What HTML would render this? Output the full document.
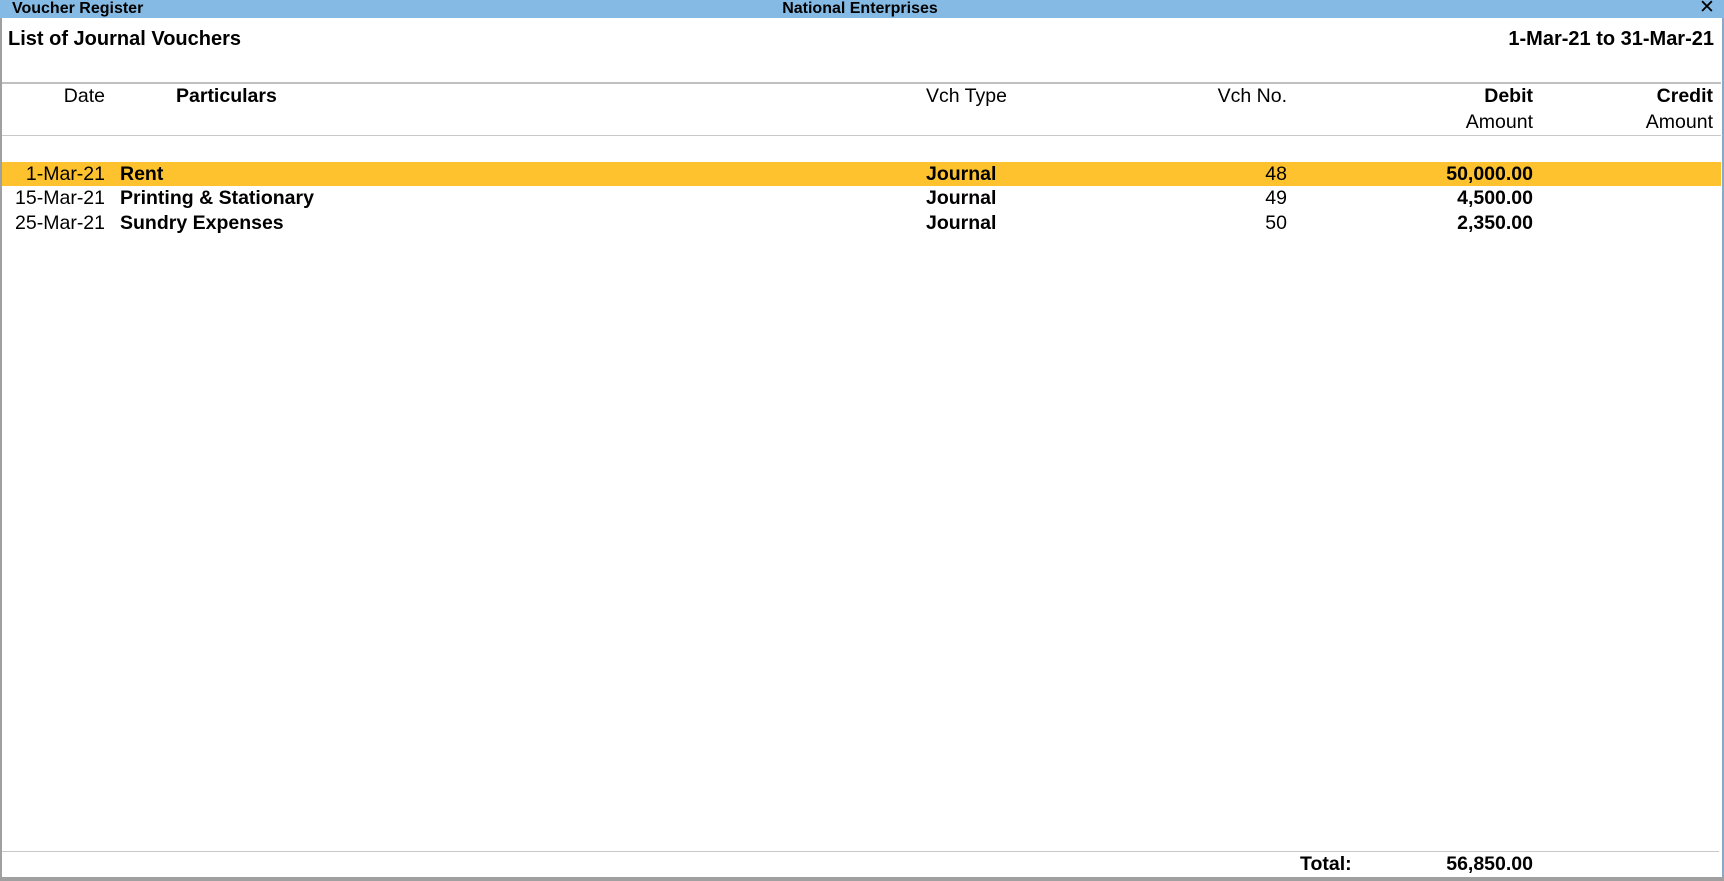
<!DOCTYPE html>
<html><head><style>
*{margin:0;padding:0;box-sizing:border-box}
body{width:1724px;height:881px;background:#fff;font-family:"Liberation Sans",Arial,sans-serif;color:#000;position:relative;overflow:hidden}
.a{position:absolute;white-space:nowrap;font-size:19.5px;line-height:20px}
.b{font-weight:bold}
.r{text-align:right}
</style></head><body>
<div style="position:absolute;left:0;top:0;width:1724px;height:881px;border:2px solid #a0a0a0;border-right-color:#8aa8c8"></div>
<div style="position:absolute;left:0;top:0;width:1724px;height:18px;background:#85bae4"></div>
<div class="a b" style="left:12px;top:0;font-size:16px;line-height:17px">Voucher Register</div>
<div class="a b" style="left:760px;width:200px;text-align:center;top:0;font-size:16px;line-height:17px">National Enterprises</div>
<div class="a" style="left:1699px;top:-2px;font-size:19px">✕</div>
<div class="a b" style="left:8px;top:29px;font-size:20px">List of Journal Vouchers</div>
<div class="a b r" style="right:10px;top:29px;font-size:20px">1-Mar-21 to 31-Mar-21</div>
<div style="position:absolute;left:2px;right:3px;top:82px;height:2px;background:#c0c0c0"></div>
<div class="a r" style="right:1619px;top:86px">Date</div>
<div class="a b" style="left:176px;top:86px">Particulars</div>
<div class="a" style="left:926px;top:86px">Vch Type</div>
<div class="a r" style="right:437px;top:86px">Vch No.</div>
<div class="a b r" style="right:191px;top:86px">Debit</div>
<div class="a r" style="right:191px;top:112px">Amount</div>
<div class="a b r" style="right:11px;top:86px">Credit</div>
<div class="a r" style="right:11px;top:112px">Amount</div>
<div style="position:absolute;left:2px;right:3px;top:135px;height:1px;background:#c8c8c8"></div>
<div style="position:absolute;left:2px;right:3px;top:162px;height:24px;background:#fdc22d"></div>
<div class="a r" style="right:1619px;top:164px">1-Mar-21</div>
<div class="a b" style="left:120px;top:164px">Rent</div>
<div class="a b" style="left:926px;top:164px">Journal</div>
<div class="a r" style="right:437px;top:164px">48</div>
<div class="a b r" style="right:191px;top:164px">50,000.00</div>
<div class="a r" style="right:1619px;top:188px">15-Mar-21</div>
<div class="a b" style="left:120px;top:188px">Printing &amp; Stationary</div>
<div class="a b" style="left:926px;top:188px">Journal</div>
<div class="a r" style="right:437px;top:188px">49</div>
<div class="a b r" style="right:191px;top:188px">4,500.00</div>
<div class="a r" style="right:1619px;top:213px">25-Mar-21</div>
<div class="a b" style="left:120px;top:213px">Sundry Expenses</div>
<div class="a b" style="left:926px;top:213px">Journal</div>
<div class="a r" style="right:437px;top:213px">50</div>
<div class="a b r" style="right:191px;top:213px">2,350.00</div>
<div style="position:absolute;left:2px;right:5px;top:851px;height:1px;background:#c8c8c8"></div>
<div class="a b" style="left:1300px;top:854px">Total:</div>
<div class="a b r" style="right:191px;top:854px">56,850.00</div>
<div style="position:absolute;left:0;right:0;top:877px;height:4px;background:#a0a0a0"></div>
</body></html>
